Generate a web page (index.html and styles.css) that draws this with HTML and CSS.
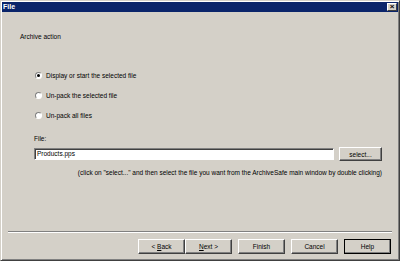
FILE: index.html
```html
<!DOCTYPE html>
<html>
<head>
<meta charset="utf-8">
<link rel="stylesheet" href="styles.css">
</head>
<body>
<div class="window">
  <div class="titlebar">
    <span class="title">File</span>
    <span class="close">×</span>
  </div>
  <div class="content">
    <div class="heading">Archive action</div>
    <div class="options">
      <div class="opt"><span class="radio checked"></span><span>Display or start the selected file</span></div>
      <div class="opt"><span class="radio"></span><span>Un-pack the selected file</span></div>
      <div class="opt"><span class="radio"></span><span>Un-pack all files</span></div>
    </div>
    <div class="filelabel">File:</div>
    <div class="filerow">
      <div class="input">Products.pps</div>
      <div class="btn select"><span>select...</span></div>
    </div>
    <div class="hint">(click on "select..." and then select the file you want from the ArchiveSafe main window by double clicking)</div>
  </div>
  <div class="footer">
    <div class="sep"></div>
    <div class="buttons">
      <div class="btn nav"><span>&lt; <u>B</u>ack</span></div>
      <div class="btn nav"><span><u>N</u>ext &gt;</span></div>
      <div class="btn gap"><span>Finish</span></div>
      <div class="btn gap"><span>Cancel</span></div>
      <div class="btn gap def"><span>Help</span></div>
    </div>
  </div>
</div>
</body>
</html>
```
FILE: styles.css
```css
html, body {
  margin: 0;
  padding: 0;
  background: #d4d0c8;
}
.window {
  width: 400px;
  height: 261px;
  box-sizing: border-box;
  border: 1px solid;
  border-color: #d4d0c8 #404040 #404040 #d4d0c8;
  box-shadow: inset 1px 1px #ffffff, inset -1px -1px #808080;
  padding: 1px;
  background: #d4d0c8;
  font-family: "Liberation Sans", Arial, sans-serif;
  font-size: 6.5px;
  color: #000;
  display: flex;
  flex-direction: column;
}
.titlebar {
  height: 10px;
  background: #0a246a;
  display: flex;
  align-items: center;
  justify-content: space-between;
  padding: 0 1px 0 1px;
}
.title {
  color: #fff;
  font-weight: bold;
  font-size: 7px;
  line-height: 10px;
}
.close {
  width: 10px;
  height: 8px;
  box-sizing: border-box;
  background: #d4d0c8;
  border: 1px solid;
  border-color: #fff #404040 #404040 #fff;
  font-size: 8px;
  font-weight: bold;
  line-height: 6px;
  text-align: center;
  color: #000;
}
.content {
  flex: 1;
  display: flex;
  flex-direction: column;
  padding-left: 18px;
  padding-right: 16px;
}
.heading {
  margin-top: 20px;
  line-height: 9px;
}
.options {
  margin-top: 30px;
  padding-left: 15px;
  display: flex;
  flex-direction: column;
  gap: 11px;
}
.opt {
  display: flex;
  align-items: center;
  gap: 4px;
  line-height: 9px;
}
.radio {
  width: 7px;
  height: 7px;
  box-sizing: border-box;
  border-radius: 50%;
  background: #fff;
  border: 1px solid;
  border-color: #808080 #fff #fff #808080;
  box-shadow: 0 0 0 0.5px #d4d0c8;
  display: flex;
  align-items: center;
  justify-content: center;
}
.radio.checked::after {
  content: "";
  width: 3px;
  height: 3px;
  border-radius: 50%;
  background: #000;
}
.filelabel {
  margin-top: 14px;
  padding-left: 14px;
  line-height: 9px;
}
.filerow {
  margin-top: 4px;
  padding-left: 14px;
  display: flex;
  align-items: center;
  gap: 5px;
}
.input {
  flex: 1;
  height: 12px;
  box-sizing: border-box;
  background: #fff;
  border: 1px solid;
  border-color: #808080 #fff #fff #808080;
  box-shadow: inset 1px 1px #404040;
  padding-left: 2px;
  line-height: 10px;
}
.btn {
  box-sizing: border-box;
  background: #d4d0c8;
  border: 1px solid;
  border-color: #fff #404040 #404040 #fff;
  box-shadow: inset -1px -1px #808080;
  text-align: center;
  display: flex;
  align-items: center;
  justify-content: center;
}
.select {
  width: 43px;
  height: 14px;
}
.hint {
  margin-top: 7px;
  text-align: right;
  line-height: 9px;
}
.footer {
  padding: 0 6px 5px 6px;
}
.sep {
  height: 0;
  border-top: 1px solid #808080;
  border-bottom: 1px solid #fff;
}
.buttons {
  margin-top: 6px;
  display: flex;
  justify-content: flex-end;
  padding-right: 1px;
}
.buttons .btn {
  width: 47px;
  height: 15px;
}
.buttons .gap {
  margin-left: 6px;
}
.def {
  outline: 1px solid #000;
  outline-offset: -1px;
}
```
